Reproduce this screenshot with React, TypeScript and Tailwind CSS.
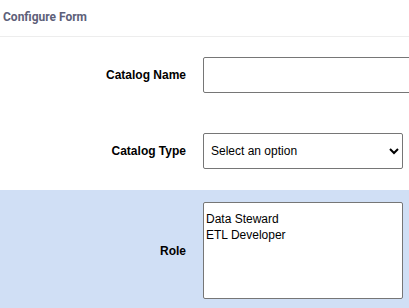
export default function App() {
  return (
    <div className="w-[409px] h-[308px] overflow-hidden bg-white font-['Liberation_Sans',Arial,sans-serif] text-[12px] text-black">
      {/* Header */}
      <div className="h-[37px] border-b border-[#ededed] pl-[3px] flex items-center">
        <span className="font-['Roboto',sans-serif] font-bold text-[12px] text-[#5d6079] -mt-[3px]">Configure Form</span>
      </div>

      {/* Fields */}
      <div className="pt-[20px] pb-[21px] flex flex-col gap-[40px]">
        <div className="flex items-center">
          <label className="w-[186px] shrink-0 text-right font-bold">Catalog Name</label>
          <input
            type="text"
            className="ml-[17px] w-[212px] h-[36px] shrink-0 border border-[#767676] rounded-[2px] bg-white px-1 outline-none"
          />
        </div>
        <div className="flex items-center">
          <label className="w-[186px] shrink-0 text-right font-bold">Catalog Type</label>
          <select className="ml-[17px] w-[200px] h-[36px] shrink-0 border border-[#767676] rounded-[2px] bg-white pl-[3px] pr-1 outline-none">
            <option>Select an option</option>
          </select>
        </div>
      </div>

      {/* Role */}
      <div className="bg-[#d0dff5] pt-[12px] pb-[12px] flex items-center">
        <label className="w-[186px] shrink-0 text-right font-bold">Role</label>
        <div className="ml-[17px] w-[200px] h-[97px] shrink-0 border border-[#767676] rounded-[2px] bg-white pt-[8px] px-[2px]">
          <div className="leading-[16px]">Data Steward</div>
          <div className="leading-[16px]">ETL Developer</div>
        </div>
      </div>
    </div>
  );
}
